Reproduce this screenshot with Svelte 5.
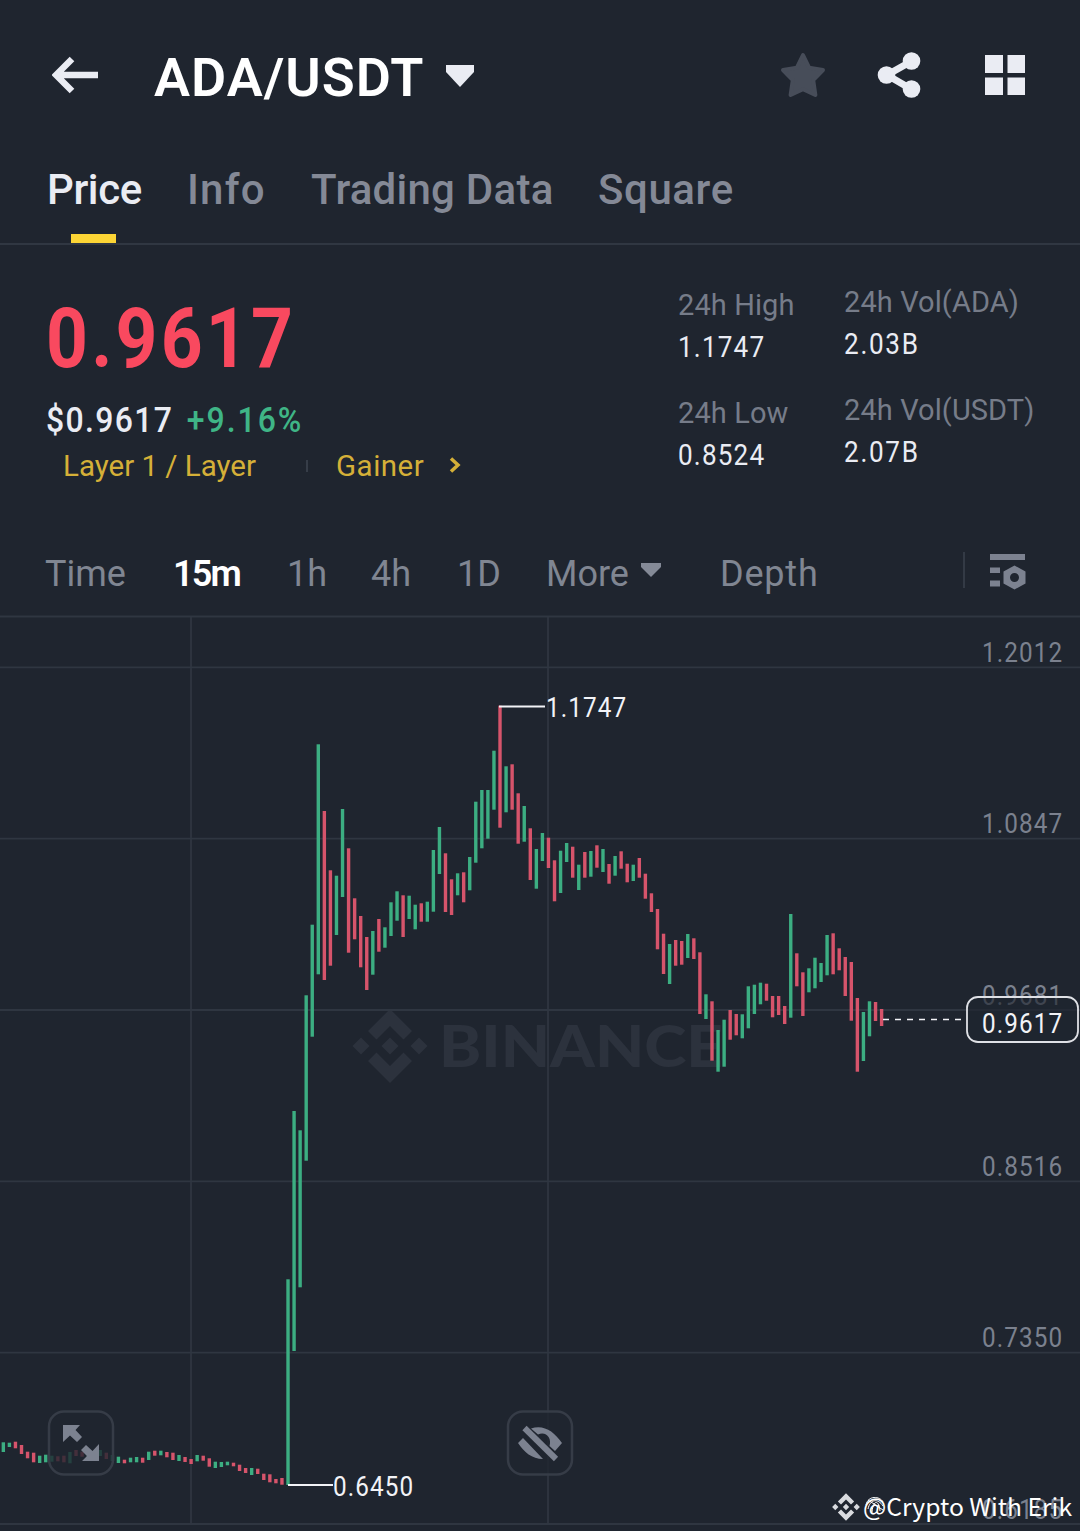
<script>
  const tabs = [
    { id: 'price-tab', label: 'Price' },
    { id: 'info-tab', label: 'Info' },
    { id: 'data-tab', label: 'Trading Data' },
    { id: 'square-tab', label: 'Square' },
  ];
  const stats = [
    [
      { label: '24h High', value: '1.1747' },
      { label: '24h Low', value: '0.8524' },
    ],
    [
      { label: '24h Vol(ADA)', value: '2.03B' },
      { label: '24h Vol(USDT)', value: '2.07B' },
    ],
  ];
  const intervals = [
    { id: 'time', label: 'Time' },
    { id: 'm15', label: '15m' },
    { id: 'h1', label: '1h' },
    { id: 'h4', label: '4h' },
    { id: 'd1', label: '1D' },
  ];
  const verticals = [191, 548];
  const levels = [
    { y: 667.3, label: '1.2012' },
    { y: 838.7, label: '1.0847' },
    { y: 1010, label: '0.9681' },
    { y: 1181.3, label: '0.8516' },
    { y: 1352.7, label: '0.7350' },
    { y: 1524, label: '0.6185' },
  ];

  // Each bar: direction (g rises, r falls), top, bottom. The newest bar sits at LAST_X.
  const LAST_X = 881.6;
  const STEP = 6.057;
  const series = `
g1442.3,1452 g1442.7,1447 r1441.7,1448.3 r1445,1454 r1451.7,1458.3 r1452.7,1462.3 g1455.7,1463 g1454.7,1462.3
g1455.7,1461.7 r1456.3,1461.3 r1455.7,1462.3 g1452,1463.3 r1450,1456 r1451.7,1456.7 g1451,1458 r1451,1456 g1450,1456
r1452.7,1459 g1455,1461 g1456.7,1463 r1459.7,1463.3 g1457.7,1462.3 g1457,1462.3 r1457.7,1462.7 g1451.7,1460
r1450.7,1455.7 g1450.7,1455.3 r1452,1457.3 r1452.7,1460 g1455,1461 r1457,1462 r1459,1464 g1455,1461.3 r1455.7,1460.7
r1458.3,1466.7 g1461.7,1468 g1462,1467 g1461.7,1465.3 r1462.7,1466.3 r1464.7,1471 r1468,1473 g1468,1475 r1468.7,1474
r1473.7,1480 r1474.3,1482.3 r1479,1483.3 r1478,1484.7
g1279.3,1485 g1111,1351 g1130.3,1287.3 g995.3,1160.7 g924.7,1036.7 g744.3,974.3 r811,980 r870.3,965.7 g875.7,935
g809,897 r848.3,952.7 r898.3,939.3 r916,967.3 r937,990 g931,974.7 r919,951.7 g927.3,947.7 g902.3,936 g891.3,920.7
r895.3,937 g895.7,919 g904.7,929.3 r903.3,921.7 g901.7,921.7 g850,911.7 g827,874 r853.3,912 r879.3,915 g873.3,895.3
r872.3,902.3 g857,890.3 g801.7,862.7 g790,848.3 g790,838.7 g750.7,809.7 r705.7,827.7 g766.3,812.3 r764.3,809.7
r793.3,843.7 g806,841.7 r828.3,880 g849,888.7 g833,861 r837.7,868 r860.3,901.3 g850.7,893 g843,862 r846.7,877.7
g864.7,890 r852,877.7 g851,876.7 r845.3,867.7 g849,872 r864,883.7 g856,875.7 r851.3,868.7 r863.7,882.3 g864.7,881
r858,877.7 r873.7,898.7 r893.3,912 r909,949.3 r933.7,974 g944,984 r940,965.7 r941,964.7 g934,958 r938.3,959
r952.3,1014 g994.3,1019 r1001.3,1060.7 g1030,1071.7 g1019.7,1066.7 r1010,1039.7 r1014,1035.3 g1014.3,1038.3
g986.3,1028.3 g984.7,1014 g982.7,1004.3 r983.7,1000.7 r996,1017.3 r996,1015 r1006,1024 g914,1017.7 r953.3,986.3
r972.3,1016 g968.3,992.3 g957.7,988.3 g963,982 g935,975.3 r933.3,974.3 r948.3,970.3 r957,996 r962,1020.7
r998,1071.7 g1012,1061 g1001.3,1036.3 r1002,1021 r1009,1026`;
  const bars = series.trim().split(/\s+/).map((item, i, all) => {
    const [top, bottom] = item.slice(1).split(',').map(Number);
    const x = LAST_X - (all.length - 1 - i) * STEP;
    return { up: item[0] === 'g', x: x - 1.7, y: top, h: bottom - top };
  });
</script>

{#snippet diamondLogo()}
  <path d="M0-37 22-15 13.500-6.500 0-20-13.500-6.500-22-15ZM0 37 22 15 13.500 6.500 0 20-13.500 6.500-22 15ZM0-8.500 8.500 0 0 8.500-8.500 0ZM-29-8.500-20.500 0-29 8.500-37.500 0ZM29-8.500 37.500 0 29 8.500 20.500 0Z" />
{/snippet}

<!-- Condensed, evenly spaced figures, 80px wide -->
{#snippet figure(x, y, value)}
  <text transform="translate({x} {y}) scale(.9 1)" textLength="89" lengthAdjust="spacing">{value}</text>
{/snippet}

<main class="screen">
  <header class="topbar">
    <svg class="back" viewBox="0 0 46 38" width="46" height="38"><path d="M20 3 4 19 20 35M4.500 19H46" /></svg>
    <h1>ADA/USDT</h1>
    <svg class="drop" viewBox="0 0 28 22" width="28" height="22"><path d="M0 0H28V7L14 22 0 7Z" /></svg>
    <div class="actions">
      <svg class="star" viewBox="0 0 46 46" width="46" height="46"><path d="M23 3 29.200 15.800 43 18 33.200 28 35.400 43 23 37.200 10.600 43 12.800 28 3 18 16.800 15.800Z" /></svg>
      <svg class="share" viewBox="0 0 44 46" width="44" height="46"><path d="M10 23 34 9.500M10 23 34 37" /><circle cx="9.500" cy="23" r="8.800" /><circle cx="34.500" cy="9" r="8.800" /><circle cx="34.500" cy="37" r="8.800" /></svg>
      <svg class="grid" viewBox="0 0 40 40" width="40" height="40"><path d="M0 0H18V18H0ZM22.500 0H40V18H22.500ZM0 22.500H18V40H0ZM22.500 22.500H40V40H22.500Z" /></svg>
    </div>
  </header>

  <nav class="tabs">
    {#each tabs as tab, i}
      <span class="tab {tab.id}" class:active={i === 0}>{tab.label}</span>
    {/each}
  </nav>

  <section class="summary">
    <div class="quote">
      <div class="price">0.9617</div>
      <div class="fiat"><span>$0.9617</span><span class="up">+9.16%</span></div>
      <div class="tags">
        <span class="layer">Layer 1 / Layer</span>
        <i></i>
        <span class="gainer">Gainer</span>
        <svg viewBox="0 0 12 16" width="12" height="16"><path d="M2 1.500 9 8 2 14.500" /></svg>
      </div>
    </div>
    <div class="stats">
      {#each stats as column, c}
        <dl class:volume={c === 1}>
          {#each column as item}
            <div><dt>{item.label}</dt><dd>{item.value}</dd></div>
          {/each}
        </dl>
      {/each}
    </div>
  </section>

  <div class="intervals">
    {#each intervals as item}
      <span class={item.id} class:selected={item.id === 'm15'}>{item.label}</span>
    {/each}
    <span class="more">More</span>
    <svg class="caret" viewBox="0 0 20 14" width="20" height="14"><path d="M0 0H20V4L10 14 0 4Z" /></svg>
    <span class="depth">Depth</span>
    <i></i>
    <svg class="settings" viewBox="0 0 36 36" width="36" height="36">
      <path d="M0 0H35V6H0ZM0 13.500H10V19H0ZM0 26.500H10V32.500H0Z" />
      <path fill-rule="evenodd" d="M24.500 11.500 35.500 17.500V29.500L24.500 35.500 13.500 29.500V17.500ZM24.500 19A4.500 4.500 0 1 0 24.500 28 4.500 4.500 0 1 0 24.500 19Z" />
    </svg>
  </div>

  <svg class="chart" viewBox="0 615 1080 916" width="1080" height="916">
    <g class="watermark">
      <g transform="translate(390 1046)">{@render diamondLogo()}</g>
      <text x="439" y="1067" textLength="284" lengthAdjust="spacingAndGlyphs">BINANCE</text>
    </g>
    <g class="rules">
      <path d="M0 616.500H1080" />
      {#each verticals as x}<path d="M{x} 617V1524" />{/each}
      {#each levels as level}<path d="M0 {level.y}H1080" />{/each}
    </g>
    {#each bars as bar}
      <rect class={bar.up ? 'rise' : 'fall'} x={bar.x} y={bar.y} width="3.400" height={bar.h} />
    {/each}
    <g class="axis">
      {#each levels as level}{@render figure(982, level.y - 5.5, level.label)}{/each}
    </g>
    <g class="marks">
      <path d="M499 706.500H545M288 1485H333" />
      <path class="dash" d="M883 1019.500H966" />
      {@render figure(546, 717, '1.1747')}
      {@render figure(333, 1496, '0.6450')}
      <rect class="tag" x="967" y="997" width="111" height="45" rx="11" />
      {@render figure(982, 1033, '0.9617')}
    </g>
    <g class="tool">
      <rect x="49" y="1411.500" width="64" height="63" rx="15" />
      <path d="M63 1425H80L75.500 1430 82 1437 77 1442 70 1435.500 63 1442ZM99 1461H82L87 1456 81 1450 86 1445 92.500 1451 99 1444Z" />
    </g>
    <g class="tool">
      <rect x="508" y="1411.500" width="64" height="63" rx="15" />
      <path class="slash" d="M524.500 1428 556 1459" />
      <path d="M531 1428.500C543 1424 554 1431 562 1443L555 1451 549.500 1446C552 1438 546 1431 538 1434.500ZM523 1438 543 1459C532 1459 524 1452 518 1443Z" />
    </g>
    <g class="credit">
      <g transform="translate(846 1507) scale(.37)">{@render diamondLogo()}</g>
      <text x="863" y="1516" textLength="209" lengthAdjust="spacingAndGlyphs">@Crypto With Erik</text>
      <path d="M866 1505C868 1495 880 1496 883 1502M868 1509C870 1499 878 1498 883 1506M872 1512C873 1500 879 1499 880 1511M868 1500 883 1510" />
    </g>
  </svg>
</main>

<style>
  :global(body) { background: #1f252f; }
  .screen {
    width: 1080px;
    height: 1531px;
    overflow: hidden;
    background: #1f252f;
    color: #eaecf3;
    font-family: Roboto, "Liberation Sans", sans-serif;
    white-space: nowrap;
  }
  svg { display: block; flex: none; }

  .topbar { display: flex; align-items: center; height: 154px; padding: 0 55px 0 52px; box-sizing: border-box; }
  .back { margin-top: -4px; fill: none; stroke: #eaecf3; stroke-width: 6.500; }
  h1 { width: 270px; margin: 1px 0 0 56px; font-size: 54px; line-height: 60px; font-weight: 600; color: #fff; letter-spacing: 1px; }
  .drop { margin: -2px 0 0 22px; fill: #eaecf3; }
  .actions { display: flex; align-items: center; margin: -4px 0 0 auto; }
  .star { fill: #474d59; stroke: #474d59; stroke-width: 4; stroke-linejoin: round; }
  .share { margin-left: 51px; fill: #eaecf3; stroke: none; }
  .share path { stroke: #eaecf3; stroke-width: 7; }
  .grid { margin-left: 64px; fill: #eaecf3; }

  .tabs { display: flex; height: 91px; padding: 14px 47px 0; box-sizing: border-box; border-bottom: 2px solid #303742; }
  .tab { position: relative; font-size: 42px; line-height: 44px; font-weight: 500; color: #848996; }
  .price-tab { width: 140px; letter-spacing: -.4px; }
  .info-tab { width: 124px; letter-spacing: 1.200px; }
  .data-tab { width: 287px; letter-spacing: .25px; }
  .square-tab { letter-spacing: .6px; }
  .active { color: #eaecf3; }
  .active::after { content: ""; position: absolute; left: 24px; top: 66px; width: 45px; height: 9px; background: #fcd535; }

  .summary { display: flex; justify-content: space-between; height: 285px; padding: 36px 45px 0 46px; box-sizing: border-box; }
  .quote { padding-top: 18px; }
  .price { font-size: 84px; line-height: 80px; font-weight: 700; letter-spacing: 3.700px; color: #f9495f; transform: scaleX(.87); transform-origin: 0 50%; }
  .fiat { display: flex; gap: 15px; margin-top: 18px; font-size: 35.500px; line-height: 46px; font-weight: 500; letter-spacing: 1.500px; transform: scaleX(.9); transform-origin: 0 50%; }
  .up { color: #3fb586; letter-spacing: 2.200px; }
  .tags { display: flex; align-items: center; margin-top: 3px; padding-left: 17px; font-size: 29.500px; line-height: 40px; color: #d5b038; }
  .layer { width: 195px; }
  .gainer { width: 89px; letter-spacing: .5px; }
  .tags i { width: 2px; height: 12px; margin: 0 28px 0 48px; background: #363d48; }
  .tags svg { margin: -2px 0 0 24px; fill: none; stroke: #d5b038; stroke-width: 3.500; }
  .stats { display: flex; }
  dl { width: 166px; margin: 0; padding-top: 3px; font-size: 29px; line-height: 42px; }
  dl div { height: 108px; }
  dt { color: #767c89; letter-spacing: .1px; }
  dd { margin: 0; color: #eaecf3; letter-spacing: 1.300px; transform: scaleX(.9); transform-origin: 0 50%; }
  .volume { width: 191px; padding-top: 0; }
  .volume dd { letter-spacing: 1.900px; }

  .intervals { display: flex; align-items: center; height: 85px; padding: 2px 54px 0 45px; box-sizing: border-box; font-size: 36px; color: #808692; }
  .selected { color: #fff; font-weight: 600; letter-spacing: -1.800px; }
  .time { width: 128px; }
  .m15 { width: 114px; }
  .h1 { width: 84px; }
  .h4 { width: 86px; }
  .d1 { width: 89px; }
  .more { width: 95px; }
  .caret { margin-top: -8px; fill: #848a97; }
  .depth { margin-left: 59px; letter-spacing: .8px; }
  .intervals i { width: 2px; height: 36px; margin: -7px 25px 0 auto; background: #333a45; }
  .settings { margin-top: -4px; fill: #7c8290; }

  .watermark { fill: #2c323d; }
  .watermark text { font: 900 57px Lato, sans-serif; }
  .rules path { stroke: #2f3641; stroke-width: 1.800; }
  .rise { fill: #3cae82; }
  .fall { fill: #d6546b; }
  .axis text { font-size: 27px; fill: #7b818e; }
  .marks path { fill: none; stroke: #f2f3f7; stroke-width: 2; }
  .marks .dash { stroke-width: 1.700; stroke-dasharray: 6 6; }
  .marks text { font-size: 27px; fill: #f2f3f7; }
  .tag { fill: #1f252f; fill-opacity: .65; stroke: #dfe1e6; stroke-width: 1.800; }
  .tool rect { fill: #1f252f; fill-opacity: .8; stroke: #363c47; stroke-width: 2.500; }
  .tool path { fill: #7c8290; }
  .tool .slash { stroke: #7c8290; stroke-width: 6; }
  .credit { fill: #d9dbdf; }
  .credit text { font: 24px "Noto Sans CJK SC", "Noto Sans", sans-serif; fill: #fff; }
  .credit path { stroke: none; }
  .credit > path { fill: none; stroke: #fff; stroke-width: 1; }
</style>
